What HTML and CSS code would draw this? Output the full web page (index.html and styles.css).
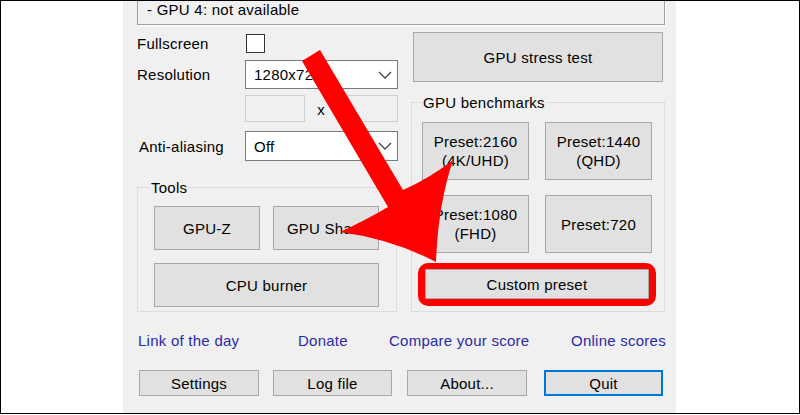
FILE: index.html
```html
<!DOCTYPE html>
<html>
<head>
<meta charset="utf-8">
<link rel="stylesheet" href="styles.css">
</head>
<body>
<div class="frame">
  <div class="dialog">
    <div class="gpulist">- GPU 4: not available</div>
    <div class="main">
      <div class="leftcol">
        <div class="row row-fs"><span class="lbl">Fullscreen</span><span class="check"></span></div>
        <div class="row row-res"><span class="lbl">Resolution</span>
          <div class="combo"><span>1280x720</span>
            <svg class="chev" width="14" height="8" viewBox="0 0 14 8"><polyline points="1,1 7,7 13,1" fill="none" stroke="#444" stroke-width="1.3"/></svg>
          </div>
        </div>
        <div class="row row-edit"><span class="lbl"></span>
          <div class="edits"><span class="edit"></span><span class="xsep">x</span><span class="edit edit2"></span></div>
        </div>
        <div class="row row-aa"><span class="lbl lbl-aa">Anti-aliasing</span>
          <div class="combo"><span>Off</span>
            <svg class="chev" width="14" height="8" viewBox="0 0 14 8"><polyline points="1,1 7,7 13,1" fill="none" stroke="#444" stroke-width="1.3"/></svg>
          </div>
        </div>
        <fieldset class="group tools">
          <legend>Tools</legend>
          <div class="tools-grid">
            <div class="btn">GPU-Z</div>
            <div class="btn">GPU Shark</div>
            <div class="btn wide">CPU burner</div>
          </div>
        </fieldset>
      </div>
      <div class="rightcol">
        <div class="btn stress">GPU stress test</div>
        <fieldset class="group bench">
          <legend>GPU benchmarks</legend>
          <div class="preset-grid">
            <div class="btn two">Preset:2160<br>(4K/UHD)</div>
            <div class="btn two">Preset:1440<br>(QHD)</div>
            <div class="btn two">Preset:1080<br>(FHD)</div>
            <div class="btn two">Preset:720</div>
          </div>
          <div class="highlight"><div class="btn custom">Custom preset</div></div>
        </fieldset>
      </div>
    </div>
    <div class="links">
      <span class="link">Link of the day</span>
      <span class="link">Donate</span>
      <span class="link">Compare your score</span>
      <span class="link">Online scores</span>
    </div>
    <div class="bottom">
      <div class="btn b120">Settings</div>
      <div class="btn b119">Log file</div>
      <div class="btn b120">About...</div>
      <div class="btn b119 quit">Quit</div>
    </div>
  </div>
  <svg class="arrow" width="800" height="415" viewBox="0 0 800 415">
    <path d="M302 61 L320 50 L403 190 Q430 178 453 160 Q438 205 436 262 Q392 239 340 232 Q366 220 388 207 Z" fill="#ff0000"/>
  </svg>
</div>
</body>
</html>
```
FILE: styles.css
```css
* { box-sizing: border-box; }
html, body { margin: 0; padding: 0; background: #fff; }
body {
  font-family: "Liberation Sans", Arial, sans-serif;
  font-size: 15px;
  line-height: 17px;
  color: #000;
  letter-spacing: 0.25px;
}
.frame {
  position: relative;
  width: 800px;
  height: 414px;
  border: 1px solid #000;
  background: #fff;
  overflow: hidden;
}
.dialog {
  margin-left: 122px;
  width: 553px;
  height: 412px;
  background: #f0f0f0;
  padding: 0 11px 0 14px;
}
.gpulist {
  height: 24px;
  border: 1px solid #a0a0a0;
  border-top: none;
  box-shadow: 1px 1px 0 #fff;
  padding-left: 9px;
  background: #f0f0f0;
}
.main {
  display: grid;
  grid-template-columns: 261px 254px;
  column-gap: 13px;
  align-items: start;
}
.leftcol, .rightcol { display: flex; flex-direction: column; }
.row { display: flex; align-items: center; }
.lbl { width: 108px; flex: none; }
.lbl-aa { padding-left: 2px; }
.row-fs { margin-top: 9px; height: 19px; }
.check {
  width: 19px; height: 19px;
  border: 1px solid #333;
  background: #fff;
  margin-left: 1px;
}
.row-res { margin-top: 7px; height: 29px; }
.row-edit { margin-top: 6px; height: 27px; }
.row-aa { margin-top: 9px; height: 30px; }
.combo {
  width: 153px; height: 100%;
  background: #fff;
  border: 1px solid #7a7a7a;
  display: flex; align-items: center; justify-content: space-between;
  padding: 0 5px 0 8px;
}
.chev { display: block; }
.edits { display: flex; width: 153px; height: 100%; align-items: center; }
.edit { width: 60px; height: 100%; border: 1px solid #cfcfcf; background: #f0f0f0; }
.edit2 { width: 61px; }
.xsep { width: 32px; text-align: center; padding-top: 2px; }

.group {
  margin: 0;
  border: 1px solid #dcdcdc;
  min-width: 0;
}
.group legend { padding: 0 1px; line-height: 17px; }
.tools {
  width: 260px;
  margin-top: 18px;
  padding: 10px 16px 4px 16px;
}
.tools legend { margin-left: -4px; }
.tools-grid {
  display: grid;
  grid-template-columns: 106px 106px;
  grid-template-rows: 44px 44px;
  gap: 13px;
}
.wide { grid-column: 1 / 3; }

.btn {
  background: #e1e1e1;
  border: 1px solid #a8a8a8;
  display: flex; align-items: center; justify-content: center;
  text-align: center;
  color: #000;
}
.stress { margin: 7px 2px 0; height: 50px; }
.bench {
  width: 254px;
  margin-top: 12px;
  padding: 11px 12px 5px 10px;
}
.preset-grid {
  display: grid;
  grid-template-columns: 107px 107px;
  grid-template-rows: 58px 58px;
  column-gap: 16px;
  row-gap: 15px;
}
.two { line-height: 19px; }
.highlight {
  margin: 10px -4px 0;
  border: 7px solid #ff0000;
  border-top-width: 6px;
  border-radius: 10px;
}
.custom { height: 30px; border-radius: 1px; }

.links {
  margin-top: 20px;
  padding-left: 1px;
  display: grid;
  grid-template-columns: 160px 91px 182px auto;
  white-space: nowrap;
}
.link { color: #2a2aa5; }
.bottom {
  margin-top: 21px;
  padding-left: 2px;
  display: grid;
  grid-template-columns: 134px 134px 137px 119px;
}
.bottom .btn { height: 26px; }
.b120 { width: 120px; }
.b119 { width: 119px; }
.quit { border: 2px solid #0078d7; }

.arrow {
  position: absolute;
  left: -1px; top: -1px;
  pointer-events: none;
}
```
